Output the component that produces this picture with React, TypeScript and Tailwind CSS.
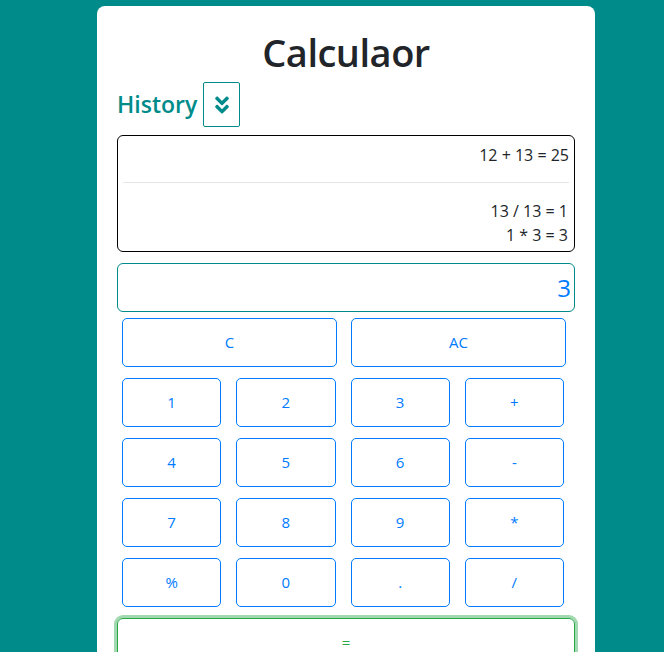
import React from "react";
import { FaAngleDoubleDown } from "react-icons/fa";

const font = { fontFamily: '"Open Sans", "Noto Sans", sans-serif' };

function Btn({ label }: { label: string }) {
  return (
    <button className="h-[49px] rounded-[5px] border border-[#007bff] bg-white text-[15px] text-[#007bff]">
      {label}
    </button>
  );
}

export default function App() {
  return (
    <div className="h-[652px] w-[664px] overflow-hidden bg-[#008b8b] pt-[6px]" style={font}>
      <div className="ml-[97px] h-[700px] w-[498px] rounded-[8px] bg-white px-[20px]">
        <h1 className="pt-[22px] text-center text-[38px] font-semibold leading-[48px] tracking-[-0.5px] text-[#212529]">
          Calculaor
        </h1>
        <div className="mt-[6px] flex items-center gap-[6px]">
          <span className="text-[23px] font-semibold text-[#008b8b]">History</span>
          <div className="flex h-[45px] w-[37px] items-center justify-center rounded-[2px] border border-[#008b8b] text-[#008b8b]">
            <FaAngleDoubleDown className="h-[22px] w-[20px]" />
          </div>
        </div>
        <div className="mt-[8px] h-[117px] rounded-[6px] border border-black px-[5px] pt-[7px] text-right text-[16px] leading-[24px] text-[#212529]">
          <div>12 + 13 = 25</div>
          <div className="mt-[15px] border-t border-[#e5e5e5]" />
          <div className="pt-[16px] pr-[1px]">13 / 13 = 1</div>
          <div className="pr-[1px]">1 * 3 = 3</div>
        </div>
        <div className="mt-[11px] flex h-[49px] items-center justify-end rounded-[6px] border border-[#008b8b] px-[3px] text-[24px] text-[#007bff]">
          3
        </div>
        <div className="ml-[5px] mr-[9px] mt-[6px] grid grid-cols-2 gap-x-[14px]">
          <Btn label="C" />
          <Btn label="AC" />
        </div>
        <div className="ml-[5px] mr-[11px] mt-[11px] grid grid-cols-4 gap-x-[15px] gap-y-[11px]">
          {["1", "2", "3", "+", "4", "5", "6", "-", "7", "8", "9", "*", "%", "0", ".", "/"].map((l) => (
            <Btn key={l} label={l} />
          ))}
        </div>
        <div className="mt-[11px] flex h-[49px] items-center justify-center rounded-[6px] border border-[#28a745] text-[15px] text-[#28a745] shadow-[0_0_0_3px_rgba(72,180,97,0.5)]">
          =
        </div>
      </div>
    </div>
  );
}
